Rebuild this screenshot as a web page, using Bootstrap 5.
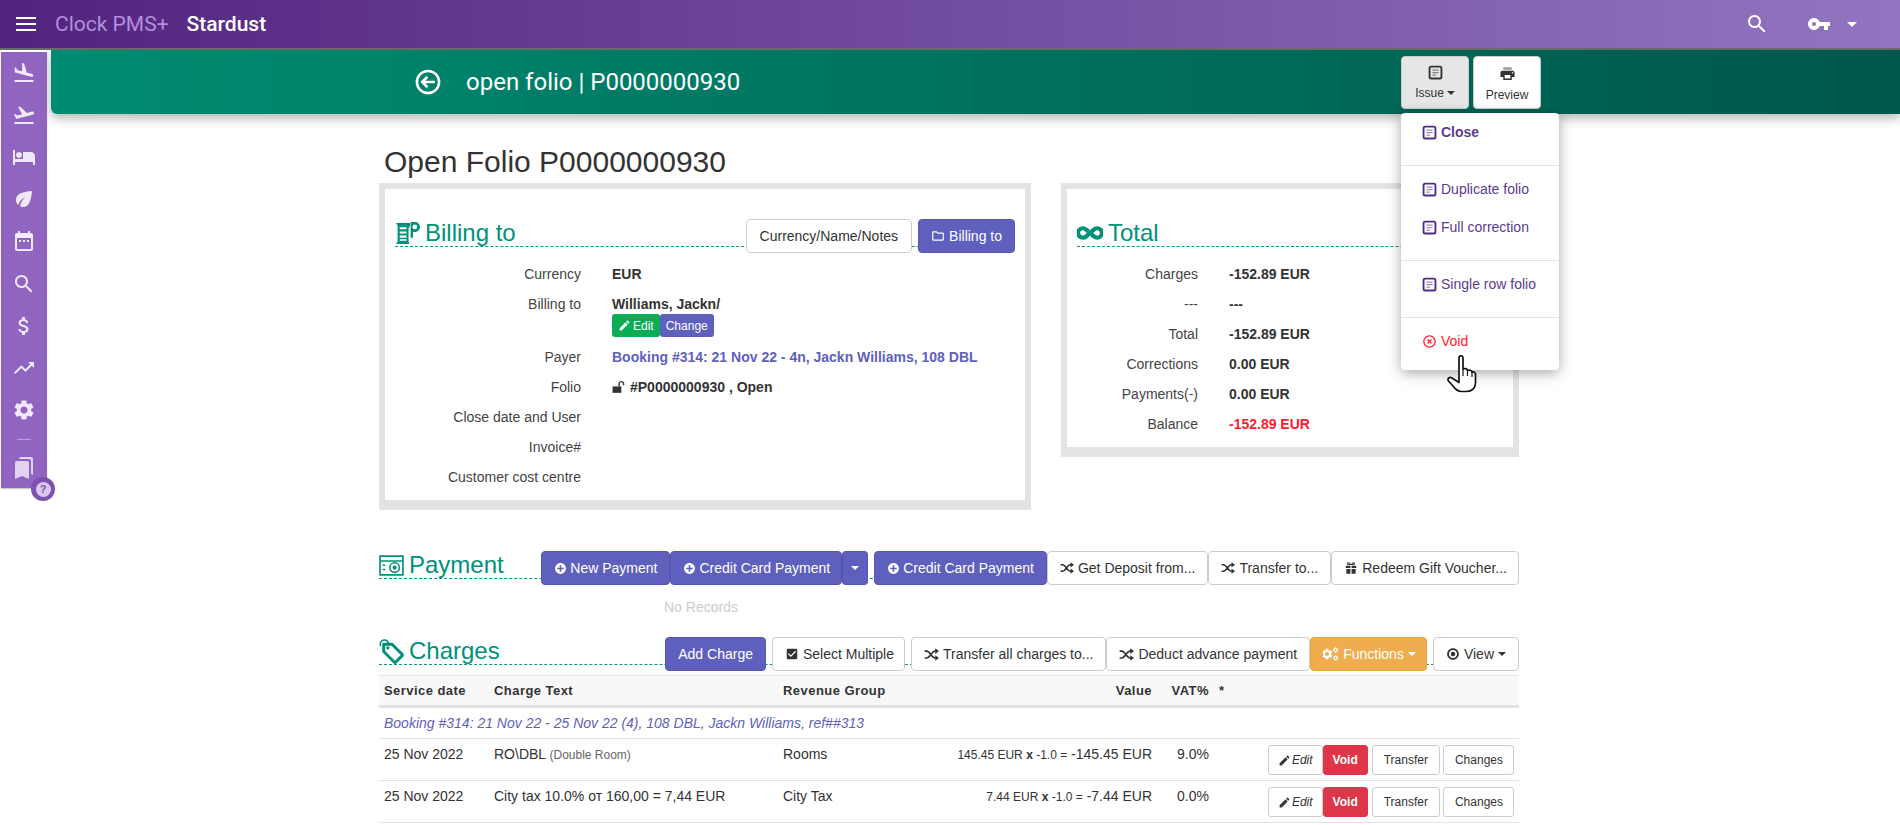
<!DOCTYPE html>
<html lang="en">
<head>
<meta charset="utf-8">
<title>Open Folio</title>
<link href="https://cdn.jsdelivr.net/npm/bootstrap@5.3.0/dist/css/bootstrap.min.css" rel="stylesheet">
<style>
html,body{height:825px;overflow:hidden}
body{font-family:"Liberation Sans",Arial,sans-serif;font-size:14px;color:#333;background:#fff;line-height:20px}
svg.ic{fill:currentColor;flex:none;vertical-align:-2px}
.topbar{height:50px;padding:0 0 2px;background:linear-gradient(90deg,#52237f,#9275c0);border-bottom:2px solid #6a6a6a;font-family:Roboto,sans-serif;color:#fff;font-size:21px}
.burger{margin-left:14px;margin-right:17px}
.brand-dim{color:#b18fdd;margin-right:18px}
.brand-main{color:#fff;font-weight:500}
.top-search{margin-right:38px}
.top-key{margin-right:16px}
.caret-top{width:0;height:0;border:5px solid transparent;border-top:5px solid #fff;border-bottom:0;margin-right:43px}
.sidebar{width:46px;height:436px;margin:2px 0 0 1px;background:#9064c1;color:#f1e9fb;position:relative;flex:none;box-shadow:0 1px 1px rgba(0,0,0,.2)}
.side-item{height:42.1px}
.side-rule{width:14px;height:1px;background:#b99ddc;margin:8px auto 16px}
.books-ic{color:#e2d3f3}
.help-dot{position:absolute;left:30px;top:425px;width:24px;height:24px;border-radius:50%;background:#7b52ae;display:flex;align-items:center;justify-content:center}
.help-dot span{width:15px;height:15px;border-radius:50%;background:#d9c8ee;color:#7b52ae;font-size:11px;font-weight:700;line-height:15px;text-align:center}
.work{margin-left:4px;min-width:0}
.greenbar{height:64px;background:linear-gradient(90deg,#008c72,#00584a);border-radius:0 0 0 6px;box-shadow:0 4px 12px rgba(0,0,0,.3);padding-left:363px;padding-right:359px;color:#fff;font-family:Roboto,sans-serif;font-size:24px}
.title-line{height:64px}
.back-ic{margin-right:24px}
.tool-wrap{position:relative}
.tool-btn{width:68px;height:53px;border:1px solid #ccc;border-radius:4px;background:#fff;color:#333;font-family:"Liberation Sans",sans-serif;font-size:12px;line-height:14px;padding:8px 0 0;text-align:center;margin-top:6px}
.tool-btn svg{display:block;margin:0 auto 6px}
.tool-on{background:#e6e6e6}
.caret-dn{display:inline-block;width:0;height:0;border:4px solid transparent;border-top:4px solid currentColor;border-bottom:0;vertical-align:2px;margin-left:3px}
.issue-menu{position:absolute;left:0;top:63px;width:158px;height:257px;background:#fff;border-radius:4px;box-shadow:0 3px 14px rgba(0,0,0,.35);z-index:5;font-size:14px;font-family:"Liberation Sans",sans-serif;color:#5c3b8e;padding-top:9px}
.menu-row{height:20px;padding-left:21px;display:flex;align-items:center;gap:4px}
.menu-row svg{color:#4b2d83}
.menu-rule{height:1px;background:#e3e3e3}
.void-red{color:#ff1a2e}
.void-red svg{color:#ff1a2e}
.hand-cursor{position:absolute;left:46px;top:305px;z-index:6}
.sheet{width:1140px;margin-left:328px}
.folio-title{font-size:30px;line-height:36px;margin:30px 0 3px 5px;font-weight:400;color:#333}
.panel-box{border:6px solid #e3e3e3;border-bottom-width:10px;background:#fff;padding:30px 10px 8px}
.panel-a{width:652px}
.panel-b{width:458px;margin-left:30px}
.sect-head{height:28px;border-bottom:1px dashed #009b80;display:flex;justify-content:space-between;align-items:flex-start}
.sect-title{color:#00917a;font-size:24px;line-height:28px;display:flex;align-items:center;gap:5px;white-space:nowrap}
.btn-set{display:flex;height:34px}
.pbtn,.wbtn,.obtn{height:34px;font-size:14px;line-height:20px;padding:6px 12px;border-radius:4px;white-space:nowrap;display:inline-flex;align-items:center;gap:4px;border:1px solid}
.pbtn{background:#5f5fbd;border-color:#5757b3;color:#fff}
.pbtn-tight{gap:3px}
.pbtn-cc{padding-right:11px}
.wbtn{background:#fff;border-color:#ccc;color:#333}
.wbtn-wide{padding-left:13px;padding-right:13px}
.obtn{background:#f0ad4e;border-color:#eea236;color:#fff;padding-right:10px}
.split-car{padding:6px 8px;border-left-color:#5252a8}
.tight-end{padding-right:10px}
.btn-gap6{gap:6px}
.gap-after{margin-left:6px}
.gift-btn{padding-right:11px}
.fact-list{padding-top:12px}
.fact-row{display:flex;padding:5px 0}
.fact-key{text-align:right;color:#444;flex:none}
.panel-a .fact-key{width:186px}
.panel-b .fact-key{width:121px}
.fact-val{margin-left:31px;font-weight:700}
.payer-link{color:#5f5fbd}
.neg-red{color:#ff1a2e}
.xbtn{height:23px;font-size:12px;line-height:14px;padding:4px 6px;border:0;border-radius:3px;color:#fff;font-weight:400;display:inline-flex;align-items:center;gap:2px;font-family:"Liberation Sans",sans-serif}
.xgreen{background:#0cab56}
.xindigo{background:#5f5fbd}
.pay-head{margin-top:41px}
.no-rec{color:#ccc;padding:18px 0 0 285px}
.chg-head{margin-top:20px;margin-bottom:10px}
.folio-table{margin:0;width:1140px;table-layout:fixed;border-top:1px solid #e3e3e3;color:#333}
.folio-table th,.folio-table td{padding:5px 5px 5px;border-bottom:1px solid #e3e3e3;box-shadow:none;vertical-align:top;line-height:20px;font-weight:400}
.folio-table thead th{background:#f8f8f8;font-weight:700;font-size:13px;letter-spacing:.45px;border-bottom:3px solid #e3e3e3;color:#333;padding:5px 5px 4px}
.folio-table .bk-row td{font-style:italic;color:#5f5fbd;font-size:14px}
.amt-small{font-size:12px}
.dim-small{font-size:12px;color:#666}
.ab{height:30px;font-size:12px;line-height:16px;padding:6px 11px;border:1px solid #ccc;border-radius:3px;background:#fff;color:#333;display:inline-flex;align-items:center;vertical-align:top}
.ab-void{background:#e03548;border-color:#e03548;color:#fff;font-weight:700;padding:6px 9px}
.ab-edit{font-style:italic;gap:1px;padding:6px 9px}
.ab-chg{padding:6px 10px 6px 11px}
.act-cell{display:flex;justify-content:flex-end;gap:3px;margin-top:1px;height:30px}
.act-join{display:flex;margin-right:1px}
</style>
</head>
<body>
<svg width="0" height="0" class="position-absolute">
<defs>
<symbol id="i-land" viewBox="0 0 24 24"><path d="M2.5 19h19v2h-19zm7.18-5.73l4.35 1.16 5.31 1.42c.8.21 1.62-.26 1.84-1.06.21-.8-.26-1.62-1.06-1.84l-5.31-1.42-2.76-9.02L10.12 2v8.28L5.15 8.95l-.93-2.32-1.45-.39v5.17l1.6.43 5.31 1.43z"/></symbol>
<symbol id="i-off" viewBox="0 0 24 24"><path d="M2.5 19h19v2h-19zm19.57-9.36c-.21-.8-1.04-1.28-1.84-1.06L14.92 10l-6.9-6.43-1.93.51 4.14 7.17-4.97 1.33-1.97-1.54-1.45.39 1.82 3.16.77 1.33 1.6-.43 5.31-1.42 4.35-1.16L21 11.49c.81-.23 1.28-1.05 1.07-1.85z"/></symbol>
<symbol id="i-bed" viewBox="0 0 24 24"><path d="M7 13c1.66 0 3-1.34 3-3S8.66 7 7 7s-3 1.34-3 3 1.34 3 3 3zm12-6h-8v7H3V5H1v15h2v-3h18v3h2v-9c0-2.21-1.79-4-4-4z"/></symbol>
<symbol id="i-leaf" viewBox="0 0 24 24"><path d="M6.05 8.05c-2.73 2.73-2.73 7.15-.02 9.88 1.47-3.4 4.09-6.24 7.36-7.93-2.77 2.34-4.71 5.61-5.39 9.32 2.6 1.23 5.8.78 7.95-1.37C19.43 14.47 20 4 20 4S9.53 4.57 6.05 8.05z"/></symbol>
<symbol id="i-cal" viewBox="0 0 24 24"><path d="M9 11H7v2h2v-2zm4 0h-2v2h2v-2zm4 0h-2v2h2v-2zm2-7h-1V2h-2v2H8V2H6v2H5c-1.11 0-1.99.9-1.99 2L3 20c0 1.1.89 2 2 2h14c1.1 0 2-.9 2-2V6c0-1.1-.9-2-2-2zm0 16H5V9h14v11z"/></symbol>
<symbol id="i-search" viewBox="0 0 24 24"><path d="M15.5 14h-.79l-.28-.27C15.41 12.59 16 11.11 16 9.5 16 5.91 13.09 3 9.5 3S3 5.91 3 9.5 5.91 16 9.5 16c1.61 0 3.09-.59 4.23-1.57l.27.28v.79l5 4.99L20.49 19l-4.99-5zm-6 0C7.01 14 5 11.99 5 9.5S7.01 5 9.5 5 14 7.01 14 9.5 11.99 14 9.5 14z"/></symbol>
<symbol id="i-money" viewBox="0 0 24 24"><path d="M11.8 10.9c-2.27-.59-3-1.2-3-2.15 0-1.09 1.01-1.85 2.7-1.85 1.78 0 2.44.85 2.5 2.1h2.21c-.07-1.72-1.12-3.3-3.21-3.81V3h-3v2.16c-1.94.42-3.5 1.68-3.5 3.61 0 2.31 1.91 3.46 4.7 4.13 2.5.6 3 1.48 3 2.41 0 .69-.49 1.79-2.7 1.79-2.06 0-2.87-.92-2.98-2.1h-2.2c.12 2.19 1.76 3.42 3.68 3.83V21h3v-2.15c1.95-.37 3.5-1.5 3.5-3.55 0-2.84-2.43-3.81-4.7-4.4z"/></symbol>
<symbol id="i-trend" viewBox="0 0 24 24"><path d="M16 6l2.29 2.29-4.88 4.88-4-4L2 16.59 3.41 18l6-6 4 4 6.3-6.29L22 12V6z"/></symbol>
<symbol id="i-gear" viewBox="0 0 24 24"><path d="M19.14 12.94c.04-.3.06-.61.06-.94 0-.32-.02-.64-.07-.94l2.03-1.58c.18-.14.23-.41.12-.61l-1.92-3.32c-.12-.22-.37-.29-.59-.22l-2.39.96c-.5-.38-1.03-.7-1.62-.94l-.36-2.54c-.04-.24-.24-.41-.48-.41h-3.84c-.24 0-.43.17-.47.41l-.36 2.54c-.59.24-1.13.57-1.62.94l-2.39-.96c-.22-.08-.47 0-.59.22L2.74 8.87c-.12.21-.08.47.12.61l2.03 1.58c-.05.3-.09.63-.09.94s.02.64.07.94l-2.03 1.58c-.18.14-.23.41-.12.61l1.92 3.32c.12.22.37.29.59.22l2.39-.96c.5.38 1.03.7 1.62.94l.36 2.54c.05.24.24.41.48.41h3.84c.24 0 .44-.17.47-.41l.36-2.54c.59-.24 1.13-.56 1.62-.94l2.39.96c.22.08.47 0 .59-.22l1.92-3.32c.12-.22.07-.47-.12-.61l-2.01-1.58zM12 15.6c-1.98 0-3.6-1.62-3.6-3.6s1.62-3.6 3.6-3.6 3.6 1.62 3.6 3.6-1.62 3.6-3.6 3.6z"/></symbol>
<symbol id="i-books" viewBox="0 0 24 24"><path d="M19 18l2 1V3c0-1.1-.9-2-2-2H8.99C7.89 1 7 1.9 7 3h10c1.1 0 2 .9 2 2v13zM15 5H5c-1.1 0-2 .9-2 2v16l7-3 7 3V7c0-1.1-.9-2-2-2z"/></symbol>
<symbol id="i-key" viewBox="0 0 24 24"><path d="M12.65 10C11.83 7.67 9.61 6 7 6c-3.31 0-6 2.69-6 6s2.69 6 6 6c2.61 0 4.83-1.67 5.65-4H17v4h4v-4h2v-4H12.65zM7 14c-1.1 0-2-.9-2-2s.9-2 2-2 2 .9 2 2-.9 2-2 2z"/></symbol>
<symbol id="i-doc" viewBox="0 0 24 24"><rect x="2.500" y="2.500" width="19" height="19" rx="2.500" fill="none" stroke="currentColor" stroke-width="3"/><path opacity=".55" d="M7 7h10v2.200H7zm0 4h10v2.200H7zm0 4h6v2.200H7z"/></symbol>
<symbol id="i-print" viewBox="0 0 24 24"><path d="M19 8H5c-1.66 0-3 1.34-3 3v6h4v4h12v-4h4v-6c0-1.66-1.34-3-3-3zm-3 11H8v-5h8v5zm3-7c-.55 0-1-.45-1-1s.45-1 1-1 1 .45 1 1-.45 1-1 1z"/><path opacity=".45" d="M18 3H6v4h12z"/></symbol>
<symbol id="i-xc" viewBox="0 0 24 24"><path d="M14.59 8L12 10.59 9.41 8 8 9.41 10.59 12 8 14.59 9.41 16 12 13.41 14.59 16 16 14.59 13.41 12 16 9.41 14.59 8zM12 2C6.47 2 2 6.47 2 12s4.47 10 10 10 10-4.47 10-10S17.53 2 12 2zm0 18c-4.41 0-8-3.59-8-8s3.59-8 8-8 8 3.59 8 8-3.59 8-8 8z"/></symbol>
<symbol id="i-inf" viewBox="0 0 24 24"><path d="M18.6 6.62c-1.44 0-2.8.56-3.77 1.53L12 10.66 10.48 12h.01L7.8 14.39c-.64.64-1.49.99-2.4.99-1.87 0-3.39-1.51-3.39-3.38S3.53 8.62 5.4 8.62c.91 0 1.76.35 2.44 1.03l1.13 1 1.51-1.34L9.22 8.2C8.2 7.18 6.84 6.62 5.4 6.62 2.42 6.62 0 9.04 0 12s2.42 5.38 5.4 5.38c1.44 0 2.8-.56 3.77-1.53l2.83-2.5.01.01L13.52 12h-.01l2.69-2.39c.64-.64 1.49-.99 2.4-.99 1.87 0 3.39 1.51 3.39 3.38s-1.52 3.38-3.39 3.38c-.9 0-1.76-.35-2.44-1.03l-1.14-1.01-1.51 1.34 1.27 1.12c1.02 1.01 2.37 1.57 3.82 1.57 2.98 0 5.4-2.41 5.4-5.38s-2.42-5.37-5.4-5.37z" stroke="currentColor" stroke-width="1.900"/></symbol>
<symbol id="i-pen" viewBox="0 0 24 24"><path d="M3 17.25V21h3.75L17.81 9.94l-3.75-3.75L3 17.25zM20.71 7.04c.39-.39.39-1.02 0-1.41l-2.34-2.34c-.39-.39-1.02-.39-1.41 0l-1.83 1.83 3.75 3.75 1.83-1.83z"/></symbol>
<symbol id="i-mix" viewBox="0 0 24 24"><path fill="none" stroke="currentColor" stroke-width="2.600" d="M1 6.500h3.500c5.500 0 7.500 11 13 11H19M1 17.500h3.500c5.500 0 7.500-11 13-11H19"/><path d="M18 2l6 4.500L18 11zm0 11l6 4.500-6 4.500z"/></symbol>
<symbol id="i-plus" viewBox="0 0 24 24"><path d="M12 2C6.48 2 2 6.48 2 12s4.48 10 10 10 10-4.48 10-10S17.52 2 12 2zm6 11.5h-4.5V18h-3v-4.5H6v-3h4.5V6h3v4.5H18z"/></symbol>
<symbol id="i-chk" viewBox="0 0 24 24"><path d="M19 3H5c-1.11 0-2 .9-2 2v14c0 1.1.89 2 2 2h14c1.11 0 2-.9 2-2V5c0-1.1-.89-2-2-2zm-9 14l-5-5 1.41-1.41L10 14.17l7.59-7.59L19 8l-9 9z"/></symbol>
<symbol id="i-gift" viewBox="0 0 24 24"><path d="M3 8h8v4H3zm10 0h8v4h-8zM4 13.5h7V22H5c-.6 0-1-.4-1-1zm9 0h7V21c0 .6-.4 1-1 1h-6zM7.5 2C9.8 2 11.2 4 12 6c.8-2 2.2-4 4.5-4C18 2 19 3 19 4.3 19 5.8 17.8 7 16 7H8C6.200 7 5 5.800 5 4.300 5 3 6 2 7.500 2zm0 2c-.4 0-.6.200-.6.500 0 .4.400.6 1.100.6h2C9.400 4.500 8.500 4 7.500 4zm9 0c-1 0-1.900.5-2.500 1.100h2c.7 0 1.100-.2 1.100-.6 0-.3-.2-.5-.6-.5z"/></symbol>
<symbol id="i-eye" viewBox="0 0 24 24"><path d="M12 2C6.480 2 2 6.480 2 12s4.480 10 10 10 10-4.480 10-10S17.520 2 12 2zm0 17c-3.870 0-7-3.130-7-7s3.130-7 7-7 7 3.130 7 7-3.130 7-7 7z"/><circle cx="12" cy="12" r="4"/></symbol>
<symbol id="i-gears" viewBox="0 0 24 24"><use href="#i-gear" x="-4" y="0" width="20" height="20" transform="translate(0 2)"/><use href="#i-gear" x="14" y="1" width="10" height="10"/><use href="#i-gear" x="14" y="13" width="10" height="10"/></symbol>
<symbol id="i-folder" viewBox="0 0 24 24"><path d="M20 6h-8l-2-2H4c-1.100 0-1.990.9-1.990 2L2 18c0 1.100.9 2 2 2h16c1.100 0 2-.9 2-2V8c0-1.100-.9-2-2-2zm0 12H4V6h5.200l2 2H20v10z"/></symbol>
<symbol id="i-unlock" viewBox="0 0 24 24"><path d="M1 11h15v11H1z"/><path d="M11 11V6.500C11 3.500 13 1.500 16 1.500s5 2 5 5V9h-2.500V6.500C18.500 5 17.500 4 16 4s-2.500 1-2.500 2.500V11z"/></symbol>
<symbol id="i-tag" viewBox="0 0 24 24"><path fill="none" stroke="currentColor" stroke-width="2.800" stroke-linejoin="round" d="M4.500 5h8L22 14.500c.5.500.5 1.200 0 1.700L16.200 22c-.5.500-1.200.5-1.700 0L4.500 12z"/><circle cx="8.500" cy="8.500" r="1.600"/><path fill="none" stroke="currentColor" stroke-width="1.500" d="M1.500 7C.5 3.500 2.500 1 5 1s4 1.500 4 4"/></symbol>
<symbol id="i-bill" viewBox="0 0 24 24"><path d="M1 2h13.500v2.500L13 7v11.500c0 2.500 1 3.500 1 3.500H1l1.500-2V4.500z"/><path fill="#fff" d="M4.500 6h6.500v2H4.500zm0 4h6.500v2H4.500zm0 4h6.500v2H4.500zm0 3.500h6.500v1.500H4.500z"/><path d="M15 1h4c2.800 0 5 2 5 4.700s-2.200 4.800-5 4.800h-1.700V16H15z"/><circle cx="19" cy="5.700" r="2.300" fill="#fff"/></symbol>
<symbol id="i-cash" viewBox="0 0 24 20"><path d="M1 1h22v18H1z" fill="none" stroke="currentColor" stroke-width="1.600"/><path d="M1 5h22v1.500H1zM3.500 9H6v1.500H3.500zm0 4H6v1.500H3.500z"/><circle cx="15" cy="12" r="4.600" fill="none" stroke="currentColor" stroke-width="1.500"/><circle cx="15" cy="12" r="2"/></symbol>
</defs>
</svg>

<nav class="navbar topbar p-0 d-flex flex-nowrap align-items-center justify-content-start">
  <svg class="ic burger" width="24" height="24"><path d="M2 19h20v-2H2zm0-6h20v-2H2zm0-8v2h20V5z"/></svg>
  <span class="brand-dim">Clock PMS+</span>
  <span class="brand-main">Stardust</span>
  <svg class="ic top-search ms-auto" width="24" height="24"><use href="#i-search"/></svg>
  <svg class="ic top-key" width="24" height="24"><use href="#i-key"/></svg>
  <span class="caret-top"></span>
</nav>

<div class="d-flex align-items-start">
  <aside class="sidebar">
    <div class="side-item d-flex align-items-center justify-content-center"><svg class="ic" width="24" height="24"><use href="#i-land"/></svg></div>
    <div class="side-item d-flex align-items-center justify-content-center"><svg class="ic" width="24" height="24"><use href="#i-off"/></svg></div>
    <div class="side-item d-flex align-items-center justify-content-center"><svg class="ic" width="24" height="24"><use href="#i-bed"/></svg></div>
    <div class="side-item d-flex align-items-center justify-content-center"><svg class="ic" width="24" height="24"><use href="#i-leaf"/></svg></div>
    <div class="side-item d-flex align-items-center justify-content-center"><svg class="ic" width="24" height="24"><use href="#i-cal"/></svg></div>
    <div class="side-item d-flex align-items-center justify-content-center"><svg class="ic" width="24" height="24"><use href="#i-search"/></svg></div>
    <div class="side-item d-flex align-items-center justify-content-center"><svg class="ic" width="24" height="24"><use href="#i-money"/></svg></div>
    <div class="side-item d-flex align-items-center justify-content-center"><svg class="ic" width="24" height="24"><use href="#i-trend"/></svg></div>
    <div class="side-item d-flex align-items-center justify-content-center"><svg class="ic" width="24" height="24"><use href="#i-gear"/></svg></div>
    <div class="side-rule"></div>
    <div class="d-flex justify-content-center books-ic"><svg class="ic" width="24" height="24"><use href="#i-books"/></svg></div>
    <div class="help-dot"><span>?</span></div>
  </aside>

  <main class="work flex-grow-1">
    <header class="greenbar d-flex align-items-start justify-content-between">
      <div class="d-flex align-items-center title-line">
        <svg class="back-ic" width="28" height="28" viewBox="0 0 24 24" fill="none" stroke="#fff" stroke-width="2.200"><circle cx="12" cy="12" r="9.500"/><path d="M18 12H7M11.500 7.500L7 12l4.500 4.500"/></svg>
        <span>open folio | P0000000930</span>
      </div>
      <div class="d-flex gap-1">
        <div class="tool-wrap">
          <div class="tool-btn tool-on"><svg class="ic" width="15" height="15"><use href="#i-doc"/></svg>Issue<span class="caret-dn"></span></div>
          <div class="issue-menu">
            <div class="menu-row fw-bold"><svg class="ic" width="15" height="15"><use href="#i-doc"/></svg>Close</div>
            <div class="menu-rule" style="margin-top:23px"></div>
            <div class="menu-row" style="margin-top:13px"><svg class="ic" width="15" height="15"><use href="#i-doc"/></svg>Duplicate folio</div>
            <div class="menu-row" style="margin-top:18px"><svg class="ic" width="15" height="15"><use href="#i-doc"/></svg>Full correction</div>
            <div class="menu-rule" style="margin-top:23px"></div>
            <div class="menu-row" style="margin-top:13px"><svg class="ic" width="15" height="15"><use href="#i-doc"/></svg>Single row folio</div>
            <div class="menu-rule" style="margin-top:23px"></div>
            <div class="menu-row void-red" style="margin-top:13px"><svg class="ic" width="15" height="15"><use href="#i-xc"/></svg>Void</div>
          </div>
          <svg class="hand-cursor" width="30" height="38" viewBox="0 0 30 38"><path fill="#fff" stroke="#111" stroke-width="1.700" stroke-linejoin="round" d="M12 3c0-3 4-3 4 0v11c2-1 4-.5 4.500 1.500 2-1 4-.3 4.500 1.500 2-.6 3.500.5 3.500 3v8c0 5-3.500 8.500-9 8.500h-5c-4 0-6-2-8.500-5.500L1.500 26c-1.500-2.500 1-4.500 3.500-3l7 4.500z"/><path fill="none" stroke="#111" stroke-width="1.200" d="M16 14v7M20.500 15.500V21M25 17v5"/></svg>
        </div>
        <div class="tool-btn"><svg class="ic" width="17" height="17"><use href="#i-print"/></svg>Preview</div>
      </div>
    </header>

    <div class="sheet">
      <h1 class="folio-title">Open Folio P0000000930</h1>
      <div class="d-flex align-items-start">
        <section class="panel-box panel-a">
          <div class="sect-head">
            <div class="sect-title"><svg class="ic" width="25" height="25"><use href="#i-bill"/></svg>Billing to</div>
            <div class="btn-set btn-gap6">
              <span class="wbtn wbtn-wide">Currency/Name/Notes</span>
              <span class="pbtn"><svg class="ic" width="14" height="14"><use href="#i-folder"/></svg>Billing to</span>
            </div>
          </div>
          <div class="fact-list">
            <div class="fact-row"><div class="fact-key">Currency</div><div class="fact-val">EUR</div></div>
            <div class="fact-row"><div class="fact-key">Billing to</div><div class="fact-val">Williams, Jackn/<div class="d-flex"><span class="xbtn xgreen"><svg class="ic" width="13" height="13"><use href="#i-pen"/></svg>Edit</span><span class="xbtn xindigo">Change</span></div></div></div>
            <div class="fact-row"><div class="fact-key">Payer</div><div class="fact-val payer-link">Booking #314: 21 Nov 22 - 4n, Jackn Williams, 108 DBL</div></div>
            <div class="fact-row"><div class="fact-key">Folio</div><div class="fact-val"><svg class="ic me-1" width="14" height="14"><use href="#i-unlock"/></svg>#P0000000930 , Open</div></div>
            <div class="fact-row"><div class="fact-key">Close date and User</div></div>
            <div class="fact-row"><div class="fact-key">Invoice#</div></div>
            <div class="fact-row"><div class="fact-key">Customer cost centre</div></div>
          </div>
        </section>
        <section class="panel-box panel-b">
          <div class="sect-head">
            <div class="sect-title"><svg class="ic" width="26" height="26"><use href="#i-inf"/></svg>Total</div>
          </div>
          <div class="fact-list">
            <div class="fact-row"><div class="fact-key">Charges</div><div class="fact-val">-152.89 EUR</div></div>
            <div class="fact-row"><div class="fact-key">---</div><div class="fact-val">---</div></div>
            <div class="fact-row"><div class="fact-key">Total</div><div class="fact-val">-152.89 EUR</div></div>
            <div class="fact-row"><div class="fact-key">Corrections</div><div class="fact-val">0.00 EUR</div></div>
            <div class="fact-row"><div class="fact-key">Payments(-)</div><div class="fact-val">0.00 EUR</div></div>
            <div class="fact-row"><div class="fact-key">Balance</div><div class="fact-val neg-red">-152.89 EUR</div></div>
          </div>
        </section>
      </div>

      <div class="sect-head pay-head">
        <div class="sect-title"><svg class="ic" width="25" height="21"><use href="#i-cash"/></svg>Payment</div>
        <div class="btn-set">
          <span class="pbtn pbtn-tight"><svg class="ic" width="13" height="13"><use href="#i-plus"/></svg>New Payment</span>
          <span class="pbtn pbtn-tight pbtn-cc"><svg class="ic" width="13" height="13"><use href="#i-plus"/></svg>Credit Card Payment</span>
          <span class="pbtn split-car"><span class="caret-dn m-0"></span></span>
          <span class="pbtn pbtn-tight gap-after"><svg class="ic" width="13" height="13"><use href="#i-plus"/></svg>Credit Card Payment</span>
          <span class="wbtn"><svg class="ic" width="14" height="14"><use href="#i-mix"/></svg>Get Deposit from...</span>
          <span class="wbtn"><svg class="ic" width="14" height="14"><use href="#i-mix"/></svg>Transfer to...</span>
          <span class="wbtn gift-btn"><svg class="ic" width="14" height="14"><use href="#i-gift"/></svg>Redeem Gift Voucher...</span>
        </div>
      </div>
      <div class="no-rec">No Records</div>

      <div class="sect-head chg-head">
        <div class="sect-title"><svg class="ic" width="25" height="25"><use href="#i-tag"/></svg>Charges</div>
        <div class="btn-set btn-gap6">
          <span class="pbtn">Add Charge</span>
          <span class="wbtn tight-end"><svg class="ic" width="14" height="14"><use href="#i-chk"/></svg>Select Multiple</span>
          <div class="d-flex">
            <span class="wbtn"><svg class="ic" width="15" height="15"><use href="#i-mix"/></svg>Transfer all charges to...</span>
            <span class="wbtn"><svg class="ic" width="15" height="15"><use href="#i-mix"/></svg>Deduct advance payment</span>
            <span class="obtn"><svg class="ic" width="16" height="16"><use href="#i-gears"/></svg>Functions<span class="caret-dn m-0"></span></span>
          </div>
          <span class="wbtn"><svg class="ic" width="14" height="14"><use href="#i-eye"/></svg>View<span class="caret-dn m-0"></span></span>
        </div>
      </div>

      <table class="table folio-table">
        <colgroup><col style="width:110px"><col style="width:289px"><col style="width:160px"><col style="width:219px"><col style="width:57px"><col style="width:305px"></colgroup>
        <thead><tr><th>Service date</th><th>Charge Text</th><th>Revenue Group</th><th class="text-end">Value</th><th class="text-end">VAT%</th><th>*</th></tr></thead>
        <tbody>
          <tr class="bk-row"><td colspan="6">Booking #314: 21 Nov 22 - 25 Nov 22 (4), 108 DBL, Jackn Williams, ref##313</td></tr>
          <tr><td>25 Nov 2022</td><td>RO\DBL <span class="dim-small">(Double Room)</span></td><td>Rooms</td><td class="text-end text-nowrap"><span class="amt-small">145.45 EUR <b>x</b> -1.0 =</span> -145.45 EUR</td><td class="text-end">9.0%</td><td><div class="act-cell"><div class="act-join"><span class="ab ab-edit"><svg class="ic" width="13" height="13"><use href="#i-pen"/></svg>Edit</span><span class="ab ab-void">Void</span></div><span class="ab">Transfer</span><span class="ab ab-chg">Changes</span></div></td></tr>
          <tr><td>25 Nov 2022</td><td>City tax 10.0% от 160,00 = 7,44 EUR</td><td>City Tax</td><td class="text-end text-nowrap"><span class="amt-small">7.44 EUR <b>x</b> -1.0 =</span> -7.44 EUR</td><td class="text-end">0.0%</td><td><div class="act-cell"><div class="act-join"><span class="ab ab-edit"><svg class="ic" width="13" height="13"><use href="#i-pen"/></svg>Edit</span><span class="ab ab-void">Void</span></div><span class="ab">Transfer</span><span class="ab ab-chg">Changes</span></div></td></tr>
        </tbody>
      </table>
    </div>
  </main>
</div>
<script src="https://cdn.jsdelivr.net/npm/bootstrap@5.3.0/dist/js/bootstrap.bundle.min.js"></script>
</body>
</html>
